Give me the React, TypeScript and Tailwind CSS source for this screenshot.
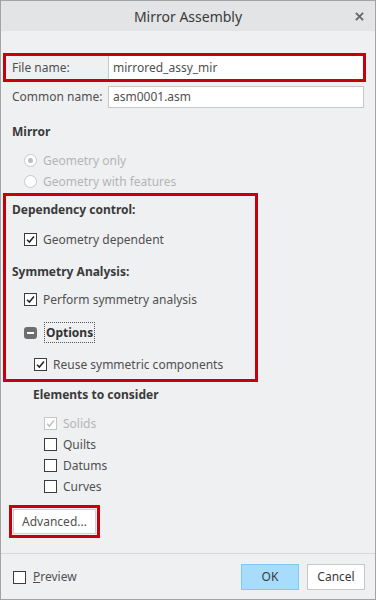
import React from "react";

const font = { fontFamily: '"Noto Sans", "Open Sans", sans-serif' };

function CheckBox({ checked = false, disabled = false }: { checked?: boolean; disabled?: boolean }) {
  return (
    <span
      className={
        "flex h-[13px] w-[13px] shrink-0 items-center justify-center border bg-white " +
        (disabled ? "border-[#c4c4c4]" : "border-[#3c3c3c]")
      }
    >
      {checked && (
        <svg viewBox="0 0 12 12" className="h-[11px] w-[11px]">
          <path
            d="M2.2 6.2 L4.8 8.8 L9.8 2.8"
            fill="none"
            stroke={disabled ? "#c0c0c0" : "#222"}
            strokeWidth="1.6"
          />
        </svg>
      )}
    </span>
  );
}

function Radio({ checked = false }: { checked?: boolean }) {
  return (
    <span className="flex h-[13px] w-[13px] shrink-0 items-center justify-center rounded-full border border-[#c8c8c8] bg-white">
      {checked && <span className="h-[5px] w-[5px] rounded-full bg-[#bdbdbd]" />}
    </span>
  );
}

function CheckRow({
  label,
  checked,
  disabled,
  className = "",
}: {
  label: string;
  checked?: boolean;
  disabled?: boolean;
  className?: string;
}) {
  return (
    <div className={"flex h-[21px] items-center gap-[6px] " + className}>
      <CheckBox checked={checked} disabled={disabled} />
      <span className={disabled ? "text-[#b5b5b5]" : "text-[#505050]"}>{label}</span>
    </div>
  );
}

export default function App() {
  return (
    <div
      style={font}
      className="box-border flex h-[600px] w-[376px] flex-col border border-[#a3a3a3] bg-[#eff0f2] text-[12px] text-[#505050]"
    >
      {/* title bar */}
      <div className="relative flex h-[30px] items-center justify-center bg-[#e2e4e6] text-[14px] text-[#3a3a3a]">
        Mirror Assembly
        <svg viewBox="0 0 10 10" className="absolute right-[11px] top-[11px] h-[9px] w-[9px]">
          <path d="M1 1 L9 9 M9 1 L1 9" stroke="#6a6a6a" strokeWidth="2.2" />
        </svg>
      </div>

      {/* file name */}
      <div className="ml-[2px] mt-[22px] flex h-[29px] w-[363px] items-stretch border-[3px] border-[#c4000c]">
        <span className="flex w-[102px] items-center pl-[6px]">File name:</span>
        <span className="flex flex-1 items-center border-l border-[#c8c8c8] bg-white pl-[4px]">
          mirrored_assy_mir
        </span>
      </div>

      {/* common name */}
      <div className="mt-[4px] flex h-[22px] items-stretch">
        <span className="flex w-[107px] items-center pl-[11px]">Common name:</span>
        <span className="flex w-[256px] items-center border border-[#c8c8c8] bg-white pl-[4px]">
          asm0001.asm
        </span>
      </div>

      {/* mirror */}
      <div className="mt-[14px] flex h-[20px] items-center pl-[11px] font-bold text-[#3a3a3a]">Mirror</div>
      <div className="mt-[8px] flex h-[21px] items-center gap-[6px] pl-[23px] text-[#b5b5b5]">
        <Radio checked />
        <span>Geometry only</span>
      </div>
      <div className="flex h-[21px] items-center gap-[6px] pl-[23px] text-[#b5b5b5]">
        <Radio />
        <span>Geometry with features</span>
      </div>

      {/* dependency / symmetry */}
      <div className="ml-[2px] mt-[1px] flex w-[255px] flex-col border-[3px] border-[#c4000c] pb-[4px] pt-[4px]">
        <div className="flex h-[20px] items-center pl-[6px] font-bold text-[#3a3a3a]">Dependency control:</div>
        <CheckRow label="Geometry dependent" checked className="mt-[9px] pl-[18px]" />
        <div className="mt-[12px] flex h-[20px] items-center pl-[6px] font-bold text-[#3a3a3a]">
          Symmetry Analysis:
        </div>
        <CheckRow label="Perform symmetry analysis" checked className="mt-[7px] pl-[18px]" />
        <div className="mt-[12px] flex h-[21px] items-center pl-[18px]">
          <span className="flex h-[12px] w-[13px] items-center justify-center rounded-[3px] bg-[#6e6e6e]">
            <span className="h-[2px] w-[7px] bg-white" />
          </span>
          <span className="ml-[7px] flex h-[21px] items-center border border-dotted border-[#555] px-[1px] font-bold text-[#333]">
            Options
          </span>
        </div>
        <CheckRow label="Reuse symmetric components" checked className="mt-[11px] pl-[28px]" />
      </div>

      {/* elements */}
      <div className="mt-[3px] flex h-[20px] items-center pl-[32px] font-bold text-[#3a3a3a]">
        Elements to consider
      </div>
      <div className="mt-[8px] flex flex-col pl-[43px]">
        <CheckRow label="Solids" checked disabled />
        <CheckRow label="Quilts" />
        <CheckRow label="Datums" />
        <CheckRow label="Curves" />
      </div>

      {/* advanced */}
      <div className="ml-[8px] mt-[8px] flex h-[33px] w-[91px] border-[3px] border-[#c4000c] p-[1px]">
        <button className="flex flex-1 items-center justify-center border border-[#d0d0d0] bg-white text-[#505050]">
          Advanced...
        </button>
      </div>

      <div className="mt-[15px] h-px bg-[#d6d7d9]" />

      {/* footer */}
      <div className="mt-[10px] flex h-[26px] items-center">
        <div className="flex items-center gap-[7px] pl-[12px]">
          <CheckBox />
          <span>
            <span className="underline">P</span>review
          </span>
        </div>
        <button className="ml-auto h-[26px] w-[58px] border border-[#7ec8f2] bg-[#a8dcfb] text-[#3a3a3a]">
          OK
        </button>
        <button className="ml-[8px] mr-[10px] h-[26px] w-[58px] border border-[#c8c8c8] bg-white text-[#3a3a3a]">
          Cancel
        </button>
      </div>
    </div>
  );
}
